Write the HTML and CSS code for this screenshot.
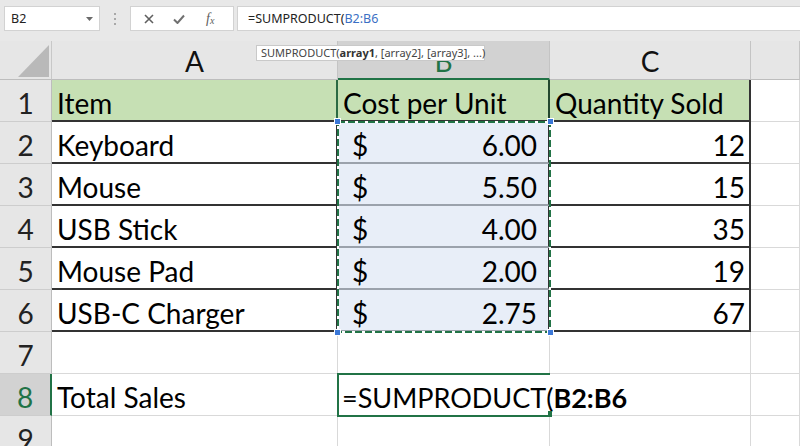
FILE: index.html
```html
<!DOCTYPE html>
<html lang="en">
<head>
    <meta charset="UTF-8">
    <title>SUMPRODUCT</title>
    <link rel="stylesheet" href="styles.css">
</head>
<body>
    <div class="toolbar">
        <div class="name-box">
            <span>B2</span>
            <svg class="caret" width="7" height="4" viewBox="0 0 7 4"><polygon points="0,0 7,0 3.5,4"/></svg>
        </div>
        <div class="grip"><i></i><i></i><i></i></div>
        <div class="fn-buttons">
            <svg width="10" height="10" viewBox="0 0 10 10"><path d="M1 1 L9 9 M9 1 L1 9" stroke="#606060" stroke-width="1.6" fill="none"/></svg>
            <svg width="12" height="10" viewBox="0 0 12 10"><path d="M1 5.5 L4.5 9 L11 1.5" stroke="#707070" stroke-width="2" fill="none"/></svg>
            <span class="fx">f<sub>x</sub></span>
        </div>
        <div class="formula-bar">=SUMPRODUCT(<span class="ref">B2:B6</span></div>
    </div>

    <div class="sheet">
        <div class="corner">
            <svg width="52" height="39" viewBox="0 0 52 39"><polygon points="49,4 49,36 18,36" fill="#b9b9b9"/></svg>
        </div>
        <div class="col-head">A</div>
        <div class="col-head active">B</div>
        <div class="col-head">C</div>
        <div class="col-head"></div>

        <div class="row-head">1</div>
        <div class="cell hdr t a1">Item</div>
        <div class="cell hdr t b1">Cost per Unit</div>
        <div class="cell hdr t">Quantity Sold</div>
        <div class="cell"></div>

        <div class="row-head">2</div>
        <div class="cell t">Keyboard</div>
        <div class="cell t sel first">
            <span>$</span><span>6.00</span>
            <div class="copy-range">
                <svg width="214" height="212" viewBox="0 0 214 212">
                    <rect x="1" y="1" width="212" height="210" fill="none" stroke="#ffffff" stroke-width="2"/>
                    <rect x="1" y="1" width="212" height="210" fill="none" stroke="#217346" stroke-width="2" stroke-dasharray="7 3"/>
                </svg>
                <i class="handle tl"></i><i class="handle tr"></i><i class="handle bl"></i><i class="handle br"></i>
            </div>
        </div>
        <div class="cell t num">12</div>
        <div class="cell"></div>

        <div class="row-head">3</div>
        <div class="cell t">Mouse</div>
        <div class="cell t sel"><span>$</span><span>5.50</span></div>
        <div class="cell t num">15</div>
        <div class="cell"></div>

        <div class="row-head">4</div>
        <div class="cell t">USB Stick</div>
        <div class="cell t sel"><span>$</span><span>4.00</span></div>
        <div class="cell t num">35</div>
        <div class="cell"></div>

        <div class="row-head">5</div>
        <div class="cell t">Mouse Pad</div>
        <div class="cell t sel"><span>$</span><span>2.00</span></div>
        <div class="cell t num">19</div>
        <div class="cell"></div>

        <div class="row-head">6</div>
        <div class="cell t">USB-C Charger</div>
        <div class="cell t sel"><span>$</span><span>2.75</span></div>
        <div class="cell t num">67</div>
        <div class="cell"></div>

        <div class="row-head">7</div>
        <div class="cell"></div>
        <div class="cell"></div>
        <div class="cell"></div>
        <div class="cell"></div>

        <div class="row-head active">8</div>
        <div class="cell">Total Sales</div>
        <div class="cell editing">=SUMPRODUCT(<b>B2:B6</b></div>
        <div class="cell"></div>
        <div class="cell"></div>

        <div class="row-head">9</div>
        <div class="cell"></div>
        <div class="cell"></div>
        <div class="cell"></div>
        <div class="cell"></div>

        <div class="tooltip">SUMPRODUCT(<b>array1</b>, [array2], [array3], ...)</div>
    </div>
</body>
</html>
```

FILE: styles.css
```css
body {
    margin: 0;
    width: 800px;
    height: 446px;
    overflow: hidden;
    background: #ffffff;
    font-family: "Noto Sans", sans-serif;
}

/* formula bar */
.toolbar {
    height: 41px;
    background: #e8e8e8;
    display: flex;
    align-items: flex-start;
    padding-top: 6px;
    box-sizing: border-box;
}
.name-box {
    margin-left: 4px;
    width: 96px;
    height: 25px;
    box-sizing: border-box;
    background: #fff;
    border: 1px solid #d2d2d2;
    display: flex;
    align-items: center;
    justify-content: space-between;
    padding: 0 6px 0 6px;
    font-size: 12.5px;
    color: #222;
}
.caret {
    fill: #6a6a6a;
}
.grip {
    width: 30px;
    height: 25px;
    display: flex;
    flex-direction: column;
    align-items: center;
    justify-content: center;
    gap: 3px;
}
.grip i {
    width: 2px;
    height: 2px;
    background: #a8a8a8;
}
.fn-buttons {
    width: 104px;
    height: 25px;
    box-sizing: border-box;
    background: #fff;
    border: 1px solid #d2d2d2;
    display: flex;
    align-items: center;
    padding-left: 13px;
    gap: 19px;
}
.fx {
    font-family: "Liberation Serif", serif;
    font-style: italic;
    font-size: 14px;
    color: #606060;
    line-height: 1;
    margin-left: 2px;
}
.fx sub {
    font-size: 10px;
    vertical-align: -1px;
}
.formula-bar {
    margin-left: 3px;
    flex: 1;
    height: 25px;
    box-sizing: border-box;
    background: #fff;
    border: 1px solid #d2d2d2;
    border-right: none;
    padding-left: 10px;
    font-size: 12.5px;
    line-height: 23px;
    color: #222;
}
.formula-bar .ref {
    color: #3a6fc4;
}

/* grid */
.sheet {
    position: relative;
    display: grid;
    grid-template-columns: 52px 286px 212px 201px 49px;
    grid-template-rows: 39px repeat(9, 42px);
}
.sheet > div {
    box-sizing: border-box;
}
.corner {
    background: #e6e6e6;
    border-right: 1px solid #c8c8c8;
    border-bottom: 1px solid #bdbdbd;
}
.col-head {
    background: #e6e6e6;
    border-right: 1px solid #c4c4c4;
    border-bottom: 1px solid #bdbdbd;
    font-family: Lato, sans-serif;
    font-size: 28px;
    line-height: 1;
    color: #111;
    display: flex;
    align-items: flex-end;
    justify-content: center;
    padding-bottom: 4px;
}
.col-head.active {
    background: #d2d2d2;
    color: #217346;
    border-bottom: 2px solid #217346;
    padding-bottom: 3px;
}
.row-head {
    background: #e6e6e6;
    border-right: 1px solid #bdbdbd;
    border-bottom: 1px solid #cdcdcd;
    font-family: Lato, sans-serif;
    font-size: 28px;
    line-height: 1;
    color: #222;
    display: flex;
    align-items: flex-end;
    justify-content: center;
    padding-bottom: 4px;
}
.row-head.active {
    background: #d2d2d2;
    color: #217346;
    border-right: 2px solid #217346;
}
.cell {
    border-right: 1px solid #d9d9d9;
    border-bottom: 1px solid #d9d9d9;
    font-family: Lato, sans-serif;
    font-size: 28px;
    line-height: 1;
    color: #000;
    white-space: nowrap;
    display: flex;
    align-items: flex-end;
    padding: 0 6px 4px 5px;
}
.t {
    border-right: 2px solid #333;
    border-bottom: 2px solid #333;
    padding-bottom: 3px;
}
.hdr {
    background: #c6e0b4;
}
.a1 {
    border-right-color: #2b6a44;
}
.b1 {
    border-right-color: #24472f;
}
.num {
    justify-content: flex-end;
    padding-right: 4px;
}
.sel {
    position: relative;
    background: #e8eef8;
    border-bottom-color: #9ba2ac;
    justify-content: space-between;
    padding-left: 14px;
    padding-right: 11px;
}
.copy-range {
    position: absolute;
    left: -1px;
    top: -1px;
    width: 214px;
    height: 212px;
    z-index: 2;
}
.copy-range svg {
    display: block;
}
.handle {
    position: absolute;
    width: 5px;
    height: 5px;
    background: #3b78d8;
    border: 1px solid #fff;
}
.handle.tl { left: -3px; top: -3px; }
.handle.tr { right: -3px; top: -3px; }
.handle.bl { left: -3px; bottom: -3px; }
.handle.br { right: -3px; bottom: -3px; }

.editing {
    position: relative;
    z-index: 1;
    margin: -1px 0 -1px -1px;
    border: 2px solid #217346;
    border-right: none;
    padding-left: 3px;
    padding-bottom: 4px;
    font-size: 27px;
    overflow: visible;
}
.editing b {
    font-weight: 700;
}
.editing::after {
    content: "";
    position: absolute;
    right: -2px;
    bottom: -2px;
    width: 4px;
    height: 6px;
    background: #217346;
}

.tooltip {
    position: absolute;
    left: 256px;
    top: 4px;
    width: 229px;
    height: 16px;
    box-sizing: border-box;
    background: #fff;
    border: 1px solid #c9c9c9;
    font-size: 11px;
    line-height: 14px;
    padding-left: 4px;
    color: #444;
    white-space: nowrap;
    z-index: 3;
}
.tooltip b {
    color: #333;
}
```
